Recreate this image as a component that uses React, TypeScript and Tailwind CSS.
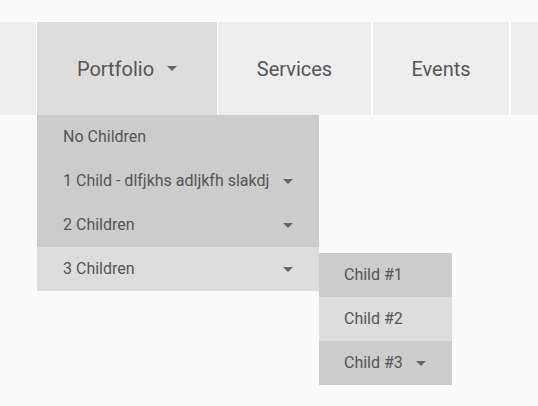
import React from "react";

function Caret() {
  return (
    <span className="inline-block w-0 h-0 border-l-[5px] border-r-[5px] border-t-[5px] border-l-transparent border-r-transparent border-t-[#666]" />
  );
}

export default function App() {
  return (
    <div
      className="w-[538px] h-[406px] bg-[#fafafa] pt-[22px] text-[#555]"
      style={{ fontFamily: "Roboto, 'Liberation Sans', sans-serif" }}
    >
      <nav className="flex h-[93px] bg-white">
        <div className="w-[36px] shrink-0 bg-[#eee]" />
        <div className="relative ml-[1px] w-[180px] shrink-0 bg-[#ddd] flex items-center justify-center gap-[13px] text-[20px]">
          <span>Portfolio</span>
          <Caret />
          <div className="absolute left-0 top-[93px] w-[282px] bg-[#ccc] text-[16px]">
            <div className="h-[44px] flex items-center pl-[26px] pr-[26px]">No Children</div>
            <div className="h-[44px] flex items-center justify-between pl-[26px] pr-[26px]">
              <span>1 Child - dlfjkhs adljkfh slakdj</span>
              <Caret />
            </div>
            <div className="h-[44px] flex items-center justify-between pl-[26px] pr-[26px]">
              <span>2 Children</span>
              <Caret />
            </div>
            <div className="relative h-[44px] flex items-center justify-between pl-[26px] pr-[26px] bg-[#ddd]">
              <span>3 Children</span>
              <Caret />
              <div className="absolute left-full top-[6px] w-[133px] bg-[#ccc]">
                <div className="h-[44px] flex items-center pl-[25px]">Child #1</div>
                <div className="h-[44px] flex items-center pl-[25px] bg-[#ddd]">Child #2</div>
                <div className="h-[44px] flex items-center gap-[13px] pl-[25px]">
                  <span>Child #3</span>
                  <Caret />
                </div>
              </div>
            </div>
          </div>
        </div>
        <div className="ml-[1px] w-[153px] shrink-0 bg-[#eee] flex items-center justify-center text-[20px]">
          Services
        </div>
        <div className="ml-[2px] w-[136px] shrink-0 bg-[#eee] flex items-center justify-center text-[20px]">
          Events
        </div>
        <div className="ml-[2px] flex-1 bg-[#eee]" />
      </nav>
    </div>
  );
}
